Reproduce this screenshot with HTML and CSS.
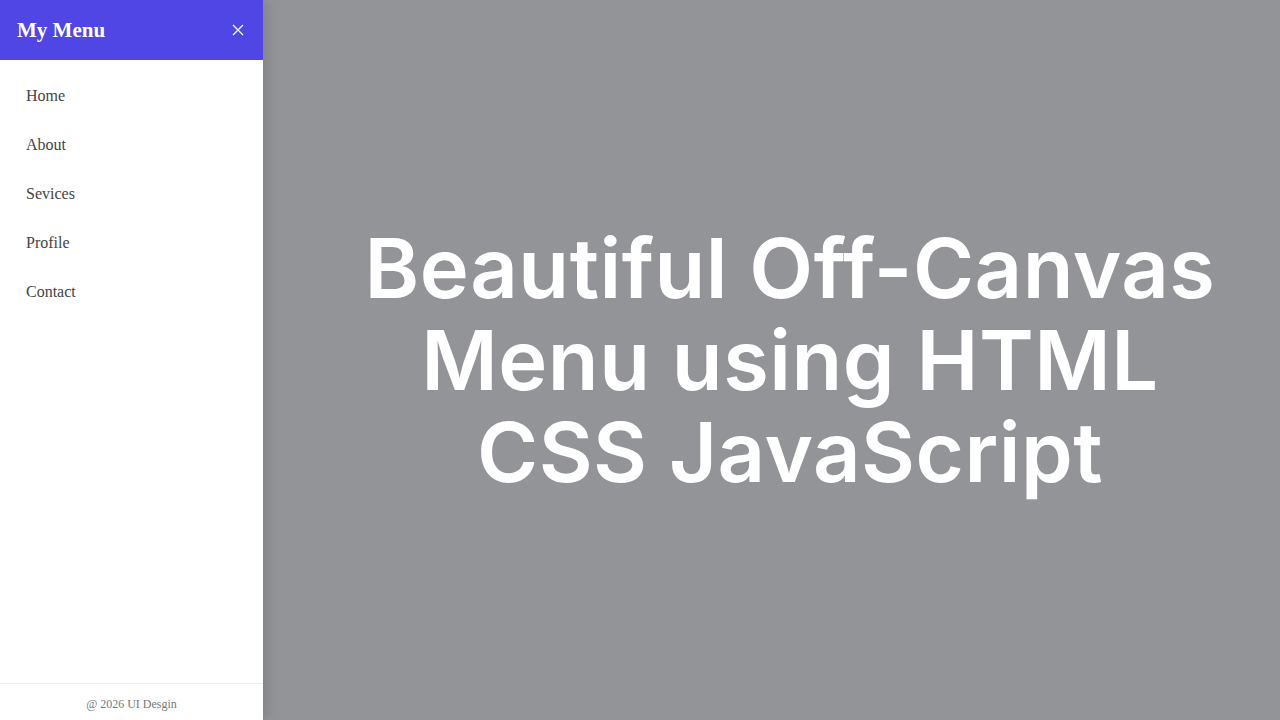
FILE: index.html
```html
<!DOCTYPE html>
<html lang="en">
<head>
<meta charset="utf-8">
<title>Off-Canvas Menu</title>
<link rel="stylesheet" href="styles.css">
</head>
<body>
<div class="page">
  <aside class="sidebar">
    <header class="sidebar-head">
      <h2 class="sidebar-title">My Menu</h2>
      <svg class="close" width="12" height="12" viewBox="0 0 12 12" aria-label="Close">
        <path d="M1 1 L11 11 M11 1 L1 11" stroke="#ffffff" stroke-width="1.3" fill="none"/>
      </svg>
    </header>
    <nav class="menu">
      <a class="menu-item" href="#">Home</a>
      <a class="menu-item" href="#">About</a>
      <a class="menu-item" href="#">Sevices</a>
      <a class="menu-item" href="#">Profile</a>
      <a class="menu-item" href="#">Contact</a>
    </nav>
    <footer class="sidebar-foot">@ 2026 UI Desgin</footer>
  </aside>
  <main class="content">
    <h1 class="hero">Beautiful Off-Canvas Menu using HTML CSS JavaScript</h1>
  </main>
</div>
</body>
</html>
```
FILE: styles.css
```css
html, body {
  margin: 0;
  height: 100%;
}
body {
  background: #939498;
  font-family: "Liberation Serif", "Times New Roman", serif;
}
.page {
  display: flex;
  height: 720px;
}
.sidebar {
  width: 263px;
  flex: 0 0 263px;
  background: #ffffff;
  display: flex;
  flex-direction: column;
  box-shadow: 4px 0 12px rgba(0,0,0,0.12);
  position: relative;
  z-index: 1;
}
.sidebar-head {
  height: 60px;
  background: #4f46e5;
  display: flex;
  align-items: center;
  justify-content: space-between;
  padding: 0 19px 0 17px;
  box-sizing: border-box;
}
.sidebar-title {
  margin: 0;
  color: #ffffff;
  font-size: 21px;
  font-weight: bold;
}
.close {
  display: block;
}
.menu {
  display: flex;
  flex-direction: column;
  padding: 11px 0 0 26px;
  flex: 1;
}
.menu-item {
  color: #444444;
  text-decoration: none;
  font-size: 16px;
  line-height: 49px;
}
.sidebar-foot {
  border-top: 1px solid #eeeeee;
  height: 36px;
  line-height: 40px;
  text-align: center;
  font-size: 12px;
  color: #777777;
}
.content {
  flex: 1;
  display: flex;
  align-items: center;
  justify-content: center;
  padding-left: 37px;
}
.hero {
  margin: 0;
  color: #ffffff;
  font-family: Inter, "Noto Sans", sans-serif;
  font-weight: 600;
  font-size: 83px;
  line-height: 92px;
  text-align: center;
  letter-spacing: 0.5px;
  max-width: 870px;
}
```
